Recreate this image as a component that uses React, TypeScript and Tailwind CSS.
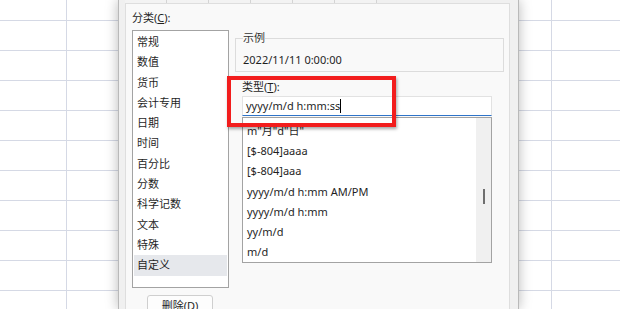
const font = { fontFamily: '"Noto Sans", "Noto Sans CJK SC", sans-serif' };

const categories = ['常规', '数值', '货币', '会计专用', '日期', '时间', '百分比', '分数', '科学记数', '文本', '特殊', '自定义'];

const formats = ['m"月"d"日"', '[$-804]aaaa', '[$-804]aaa', 'yyyy/m/d h:mm AM/PM', 'yyyy/m/d h:mm', 'yy/m/d', 'm/d'];

function SheetColumn({ firstWidth }: { firstWidth: string }) {
  const rows = Array.from({ length: 10 });
  return (
    <div className="flex flex-col h-full bg-white">
      <div className="flex h-[21px] border-b border-[#d5d9e5] shrink-0">
        <div className={`${firstWidth} border-r border-[#d5d9e5]`} />
        <div className="flex-1" />
      </div>
      {rows.map((_, i) => (
        <div key={i} className="flex h-[30px] border-b border-[#d5d9e5] shrink-0">
          <div className={`${firstWidth} border-r border-[#d5d9e5]`} />
          <div className="flex-1" />
        </div>
      ))}
    </div>
  );
}

export default function App() {
  return (
    <div className="relative flex w-[620px] h-[309px] overflow-hidden bg-white text-[11px] text-[#1f1f1f]" style={font}>
      {/* left sheet */}
      <div className="w-[118px] shrink-0">
        <SheetColumn firstWidth="w-[67px]" />
      </div>

      {/* dialog */}
      <div className="relative z-10 w-[401px] shrink-0 flex flex-col bg-[#f0f0f0] border-x border-[#b9b9b9] shadow-[0_0_12px_rgba(0,0,0,0.28)]">
        <div className="flex h-[3px] ml-[6px] shrink-0">
          {[0, 1, 2, 3, 4, 5].map(i => (
            <div key={i} className="w-[42px] h-full border-r border-[#d4d4d4] bg-[#f3f3f3]" />
          ))}
        </div>

        <div className="flex-1 ml-[6px] mr-[8px] bg-[#f9f9f9] border border-b-0 border-[#dedede] flex pl-[6px]">
          {/* categories */}
          <div className="w-[97px] shrink-0 flex flex-col">
            <div className="pt-[4px] h-[24px] leading-[20px]">分类(<span className="underline">C</span>):</div>
            <div className="mt-[2px] h-[258px] border border-[#a3a3a3] bg-white pt-[1px] px-[1px]">
              {categories.map((c, i) => (
                <div
                  key={c}
                  className={`h-[20.3px] leading-[20.3px] pl-[3px] ${i === categories.length - 1 ? 'bg-[#e6e8ec]' : ''}`}
                >
                  {c}
                </div>
              ))}
            </div>
            <div className="mt-[7px] ml-[15px] w-[66px] h-[24px] shrink-0 rounded-[3px] border border-[#cfcfcf] bg-[#fdfdfd] text-center leading-[20px]">
              删除(<span className="underline">D</span>)
            </div>
          </div>

          {/* right side */}
          <div className="ml-[6px] w-[269px] flex flex-col">
            <fieldset className="mt-[26px] h-[42px] border border-[#dcdcdc] px-[7px]">
              <legend className="px-0 leading-[16px] text-[#333]">示例</legend>
              <div className="pt-[6px] leading-[16px]">2022/11/11 0:00:00</div>
            </fieldset>

            <div className="ml-[7px] w-[250px] flex flex-col">
              <div className="pt-[7px] mb-[1px] leading-[16px]">类型(<span className="underline">T</span>):</div>
              <div className="h-[20px] bg-white border border-[#e2e2e2] border-b-[#2f74c8] flex items-center pl-[3px]">
                <span>yyyy/m/d h:mm:ss</span>
                <span className="w-px h-[14px] bg-black" />
              </div>
              <div className="mt-[1px] h-[146px] border border-[#a3a3a3] bg-white flex">
                <div className="flex-1 pt-[3px] pl-[4px]">
                  {formats.map(f => (
                    <div key={f} className="h-[20.2px] leading-[20.2px] whitespace-nowrap">{f}</div>
                  ))}
                </div>
                <div className="w-[15px] bg-[#f0f0f0] pt-[71px] flex justify-center">
                  <div className="w-[2px] h-[15px] bg-[#6e6e6e]" />
                </div>
              </div>
            </div>
          </div>
        </div>
      </div>

      {/* right sheet */}
      <div className="flex-1">
        <SheetColumn firstWidth="w-[33px]" />
      </div>

      {/* red highlight */}
      <div className="absolute z-20 left-[227px] top-[76px] w-[169px] h-[51px] border-4 border-[#f21d1d] shadow-[1px_2px_3px_rgba(0,0,0,0.35)]" />
    </div>
  );
}
